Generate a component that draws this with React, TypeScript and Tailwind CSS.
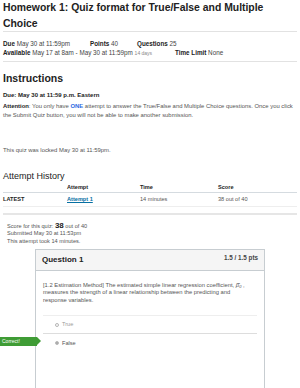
import React from "react";

function Radio({ checked }: { checked?: boolean }) {
  return (
    <span className="w-[4px] h-[4px] rounded-full border border-[#b5b5b5] bg-white flex items-center justify-center shrink-0">
      {checked && <span className="w-[2px] h-[2px] rounded-full bg-[#9a9a9a]" />}
    </span>
  );
}

export default function App() {
  return (
    <div className="w-[300px] h-[388px] overflow-hidden bg-white px-[3px] text-[#2d3b45] font-['Liberation_Sans',Arial,sans-serif]">
      <h1 className="text-[10.4px] font-bold leading-[16px] text-[#222] pt-[0px] border-b border-[#e2e2e2] h-[32px]">
        Homework 1: Quiz format for True/False and Multiple Choice
      </h1>

      <div className="pt-[7px] pb-[3px] border-b border-[#e2e2e2] text-[6.3px] leading-[9px] text-[#444]">
        <div className="flex">
          <div className="w-[87px]">
            <b className="text-[#222]">Due</b> May 30 at 11:59pm
          </div>
          <div className="w-[47px]">
            <b className="text-[#222]">Points</b> 40
          </div>
          <div>
            <b className="text-[#222]">Questions</b> 25
          </div>
        </div>
        <div className="flex">
          <div className="w-[172px]">
            <b className="text-[#222]">Available</b> May 17 at 8am - May 30 at 11:59pm{" "}
            <span className="text-[5px] text-[#888]">14 days</span>
          </div>
          <div>
            <b className="text-[#222]">Time Limit</b> None
          </div>
        </div>
      </div>

      <h2 className="mt-[10px] text-[10.5px] font-bold leading-[12px] text-[#222]">Instructions</h2>
      <p className="mt-[7px] text-[6px] font-bold leading-[8px] text-[#222]">
        Due: May 30 at 11:59 p.m. Eastern
      </p>
      <p className="mt-[3px] text-[5.9px] leading-[8.5px] text-[#555]">
        <b className="text-[#222]">Attention</b>: You only have{" "}
        <b className="text-[#2d6adf]">ONE</b> attempt to answer the True/False and Multiple Choice
        questions. Once you click the Submit Quiz button, you will not be able to make another
        submission.
      </p>
      <p className="mt-[27px] text-[5.9px] leading-[8.5px] text-[#555]">
        This quiz was locked May 30 at 11:59pm.
      </p>

      <h2 className="mt-[16px] text-[9px] leading-[11px] text-[#222]">Attempt History</h2>

      <div className="mt-[1px] text-[5.6px]">
        <div className="flex h-[10px] items-center border-b border-[#d5dbe0] font-bold text-[#222]">
          <div className="w-[64px]" />
          <div className="w-[73px]">Attempt</div>
          <div className="w-[78px]">Time</div>
          <div>Score</div>
        </div>
        <div className="flex h-[14px] items-center border-b border-[#eee] text-[#555]">
          <div className="w-[64px] font-bold text-[#222]">LATEST</div>
          <div className="w-[73px]">
            <span className="text-[#0770a3] underline font-bold">Attempt 1</span>
          </div>
          <div className="w-[78px]">14 minutes</div>
          <div>38 out of 40</div>
        </div>
      </div>
      <div className="mt-[6px] border-b-2 border-[#e6e6e6]" />

      <div className="mt-[7px] pl-[4px] text-[5.6px] leading-[7.7px] text-[#555]">
        <div>
          Score for this quiz: <span className="text-[8px] font-bold text-[#222]">38</span> out of 40
        </div>
        <div>Submitted May 30 at 11:53pm</div>
        <div>This attempt took 14 minutes.</div>
      </div>

      <div className="mt-[3px] ml-[32px] w-[230px] h-[200px] border border-[#c7cdd1]">
        <div className="h-[21px] bg-[#f5f5f5] border-b border-[#c7cdd1] flex items-center justify-between px-[6px]">
          <span className="text-[8px] font-bold text-[#222]">Question 1</span>
          <span className="text-[6.3px] font-bold text-[#444] -mt-[3px]">1.5 / 1.5 pts</span>
        </div>
        <div className="px-[7px] pt-[11px]">
          <p className="pr-[4px] text-[5.8px] leading-[7.5px] text-[#555]">
            [1.2 Estimation Method] The estimated simple linear regression coefficient,{" "}
            <i>
              β̂<sub className="text-[4px]">0</sub>
            </i>{" "}
            , measures the strength of a linear relationship between the predicting and response
            variables.
          </p>
          <div className="mt-[11px] border-t border-[#eee]">
            <div className="h-[18px] flex items-center gap-[3px] pl-[12px] text-[5.6px] text-[#999] border-b border-[#ddd]">
              <Radio />
              <span>True</span>
            </div>
            <div className="relative h-[18px] flex items-center gap-[3px] pl-[12px] text-[5.6px] text-[#555]">
              <div className="absolute left-[-43px] top-[3px] h-[9px] w-[41px] flex">
                <div className="flex-1 bg-[#3f9c35] flex items-center pl-[2px] text-[5px] text-white">
                  Correct!
                </div>
                <div className="w-0 h-0 border-y-[4.5px] border-y-transparent border-l-[4px] border-l-[#3f9c35]" />
              </div>
              <Radio checked />
              <span>False</span>
            </div>
          </div>
        </div>
      </div>
    </div>
  );
}
